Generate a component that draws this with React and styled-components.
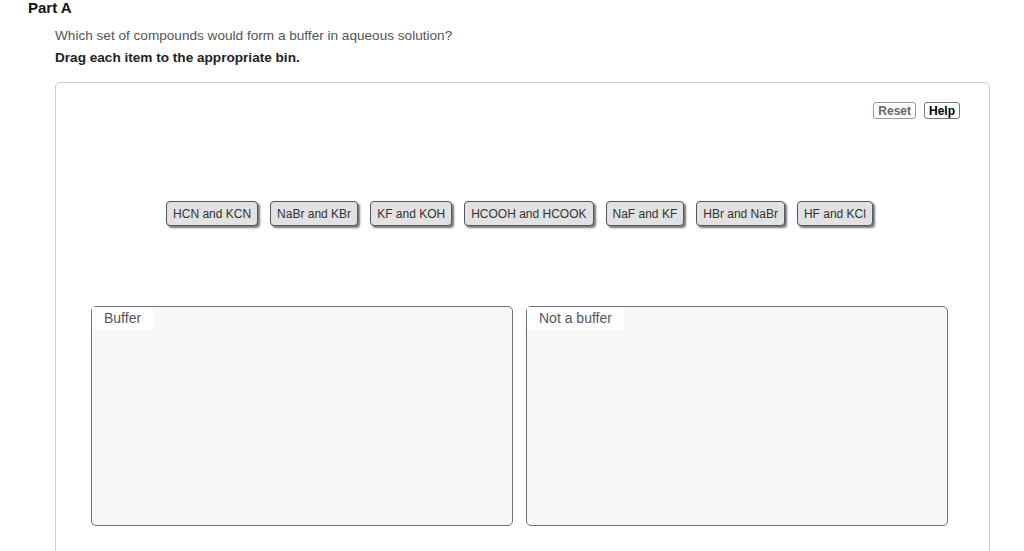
import React from "react";
import styled, { createGlobalStyle } from "styled-components";

const Global = createGlobalStyle`
  html, body { margin: 0; padding: 0; background: #fff; overflow: hidden; }
  body { font-family: Arial, "Liberation Sans", Helvetica, sans-serif; }
`;

const Page = styled.div`
  width: 1024px;
  height: 551px;
  overflow: hidden;
  position: relative;
`;

const Title = styled.h2`
  margin: 0;
  padding: 0 0 0 28px;
  font-size: 15px;
  line-height: 16px;
  font-weight: bold;
  color: #111;
`;

const Body = styled.div`
  padding-left: 55px;
  padding-right: 34px;
`;

const Question = styled.p`
  margin: 12px 0 0;
  font-size: 13.6px;
  line-height: 16px;
  color: #555;
`;

const Instruction = styled.p`
  margin: 6px 0 0;
  font-size: 13.6px;
  line-height: 16px;
  font-weight: bold;
  color: #222;
`;

const Panel = styled.div`
  margin-top: 16px;
  border: 1px solid #ccc;
  border-radius: 5px;
  height: 520px;
  box-sizing: border-box;
  padding: 19px 29px 0 35px;
`;

const Toolbar = styled.div`
  display: flex;
  justify-content: flex-end;
  gap: 8px;
`;

const ToolButton = styled.button`
  font-family: Arial, "Liberation Sans", sans-serif;
  font-size: 12px;
  font-weight: bold;
  line-height: 14px;
  height: 17px;
  padding: 0 4px;
  background: #fff;
  border: 1px solid ${(p) => (p.$muted ? "#999" : "#777")};
  border-radius: 3px;
  color: ${(p) => (p.$muted ? "#666" : "#000")};
  cursor: pointer;
`;

const Chips = styled.div`
  display: flex;
  justify-content: center;
  gap: 12px;
  margin-top: 82px;
  padding-right: 12px;
`;

const Chip = styled.div`
  font-size: 12px;
  line-height: 14px;
  color: #333;
  background: #e2e2e2;
  border: 1px solid #555563;
  border-radius: 4px;
  padding: 5px 6px 4px;
  box-shadow: 2px 2px 2px #777;
  white-space: nowrap;
`;

const Bins = styled.div`
  display: grid;
  grid-template-columns: 422px 422px;
  gap: 13px;
  margin-top: 80px;
`;

const Bin = styled.div`
  height: 218px;
  background: #f7f7f7;
  border: 1.5px solid #6f6f7a;
  border-radius: 5px;
  position: relative;
`;

const BinLabel = styled.div`
  display: inline-block;
  background: #fff;
  font-size: 14px;
  line-height: 22px;
  color: #555;
  padding: 0 12px;
`;

const items = [
  "HCN and KCN",
  "NaBr and KBr",
  "KF and KOH",
  "HCOOH and HCOOK",
  "NaF and KF",
  "HBr and NaBr",
  "HF and KCl",
];

export default function App() {
  return (
    <Page>
      <Global />
      <Title>Part A</Title>
      <Body>
        <Question>Which set of compounds would form a buffer in aqueous solution?</Question>
        <Instruction>Drag each item to the appropriate bin.</Instruction>
        <Panel>
          <Toolbar>
            <ToolButton $muted>Reset</ToolButton>
            <ToolButton>Help</ToolButton>
          </Toolbar>
          <Chips>
            {items.map((t) => (
              <Chip key={t}>{t}</Chip>
            ))}
          </Chips>
          <Bins>
            <Bin>
              <BinLabel>Buffer</BinLabel>
            </Bin>
            <Bin>
              <BinLabel>Not a buffer</BinLabel>
            </Bin>
          </Bins>
        </Panel>
      </Body>
    </Page>
  );
}
